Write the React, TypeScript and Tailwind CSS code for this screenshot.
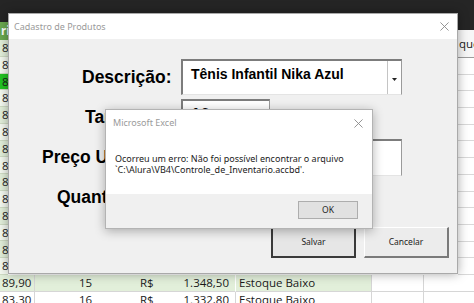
import React from "react"

const leftRows = Array.from({ length: 14 }, (_, i) => i)
const rightRows = Array.from({ length: 13 }, (_, i) => i)

const bottomRows = [
  { a: "89,90", b: "15", c: "1.348,50", d: "Estoque Baixo", green: true },
  { a: "83,30", b: "16", c: "1.332,80", d: "Estoque Baixo", green: false },
]

const CloseX = ({ size = 9 }: { size?: number }) => (
  <svg width={size} height={size} viewBox="0 0 10 10">
    <path d="M0.5 0.5 L9.5 9.5 M9.5 0.5 L0.5 9.5" stroke="#8a8a8a" strokeWidth="1" fill="none" />
  </svg>
)

const Sheet = () => {
  return (
    <div className="flex flex-col h-full font-['Open_Sans',sans-serif] text-[11.5px] text-[#1a1a1a]">
      <div className="flex h-[275px] shrink-0">
        {/* left strip */}
        <div className="w-[8px] flex flex-col overflow-hidden">
          <div className="h-[22px] shrink-0 bg-[#252525]" />
          <div className="h-[18px] shrink-0 bg-[#6aa84f] text-white font-bold leading-[18px] pl-[1px]">ri</div>
          <div className="flex-1 min-h-0 flex flex-col">
            {leftRows.map((r) => (
              <div
                key={r}
                className={`flex-1 min-h-0 flex items-center pl-[2px] leading-none border-b border-[#cfdcc4] ${
                  r === 2 ? "bg-[#21c421]" : r % 2 === 0 ? "bg-[#e2efda]" : "bg-[#f4f9f0]"
                }`}
              >
                8
              </div>
            ))}
          </div>
        </div>
        <div className="flex-1 flex flex-col">
          <div className="h-[22px] shrink-0 bg-[#252525]" />
        </div>
        {/* right strip */}
        <div className="w-[16px] flex flex-col overflow-hidden">
          <div className="h-[30px] shrink-0 bg-[#252525]" />
          <div className="h-[28px] shrink-0 bg-[#f7f7f7] border-b border-[#9c9c9c] flex items-center pl-[1px] whitespace-nowrap">
            que
          </div>
          <div className="flex-1 min-h-0 flex flex-col">
            {rightRows.map((r) => (
              <div key={r} className="flex-1 min-h-0 border-b border-[#d9d9d9] bg-white" />
            ))}
          </div>
        </div>
      </div>
      {bottomRows.map((row) => (
        <div key={row.a} className="flex h-[16.5px] shrink-0 leading-none">
          <div className={`w-[35px] flex items-center pl-[2px] border-r border-b border-[#d6d6d6] ${row.green ? "bg-[#e2efda]" : "bg-white"}`}>
            {row.a}
          </div>
          <div className={`w-[101px] flex items-center justify-center border-b border-[#d6d6d6] ${row.green ? "bg-[#e2efda]" : "bg-white"}`}>
            {row.b}
          </div>
          <div className={`w-[100px] flex items-center justify-between pl-[4px] pr-[6px] border-r border-b border-[#d6d6d6] ${row.green ? "bg-[#e2efda] border-r-white" : "bg-white"}`}>
            <span>R$</span>
            <span>{row.c}</span>
          </div>
          <div className={`w-[136px] flex items-center pl-[3px] border-r border-b border-[#d6d6d6] ${row.green ? "bg-[#e2efda]" : "bg-white"}`}>
            {row.d}
          </div>
          <div className="w-[52px] border-r border-b border-[#d6d6d6] bg-white" />
          <div className="flex-1 border-b border-[#d6d6d6] bg-white" />
        </div>
      ))}
    </div>
  )
}

const fieldBox = "bg-white border-t-2 border-l-2 border-[#7c7c7c] border-r border-b border-r-[#9a9a9a] border-b-[#e4e4e4]"

const FormRow = ({ label, pl, children }: { label: string; pl: string; children: React.ReactNode }) => (
  <div className="flex items-center h-[36px]">
    <div className={`w-[172px] ${pl} font-['Liberation_Sans',Arial,sans-serif] font-bold text-[17.5px] text-black whitespace-nowrap`}>
      {label}
    </div>
    {children}
  </div>
)

const CadastroDialog = () => {
  return (
    <div className="absolute left-[8px] top-[13px] w-[450px] h-[261px] bg-[#f0f0f0] border border-[#a9a9a9] shadow-[0_0_10px_rgba(0,0,0,0.35)] flex flex-col">
      <div className="h-[25px] bg-white flex items-center justify-between pl-[5px] pr-[8px] font-['Noto_Sans',sans-serif] text-[9px] text-[#9a9a9a]">
        <span>Cadastro de Produtos</span>
        <CloseX />
      </div>
      <div className="flex flex-col gap-[4px] pt-[20px]">
        <FormRow label="Descrição:" pl="pl-[73px]">
          <div className={`w-[221px] h-[36px] flex ${fieldBox}`}>
            <div className="flex-1 pl-[8px] pt-[3px] font-['Liberation_Sans',Arial,sans-serif] font-bold text-[14px] text-black whitespace-nowrap">
              Tênis Infantil Nika Azul
            </div>
            <div className="w-[14px] border-l border-[#c4c4c4] flex items-center justify-center pt-[3px]">
              <svg width="5" height="3" viewBox="0 0 5 3">
                <path d="M0 0 H5 L2.5 3 Z" fill="#222" />
              </svg>
            </div>
          </div>
        </FormRow>
        <FormRow label="Tamanho:" pl="pl-[76px]">
          <div className={`w-[89px] h-[36px] pl-[8px] pt-[1px] font-['Liberation_Sans',Arial,sans-serif] font-bold text-[17px] text-black ${fieldBox}`}>
            10
          </div>
        </FormRow>
        <FormRow label="Preço Unitário:" pl="pl-[33px]">
          <div className={`w-[221px] h-[37px] ${fieldBox}`} />
        </FormRow>
        <FormRow label="Quantidade:" pl="pl-[48px]">
          <div className={`w-[89px] h-[36px] ${fieldBox}`} />
        </FormRow>
      </div>
      <div className="flex justify-end gap-[8px] pr-[8px] mt-[12px] font-['Noto_Sans',sans-serif] text-[8.5px] text-[#222]">
        <button className="w-[85px] h-[31px] bg-[#e6e6e6] border-2 border-[#3a3a3a] flex items-center justify-center">
          Salvar
        </button>
        <button className="w-[85px] h-[31px] bg-[#ececec] border border-t-white border-l-white border-r-2 border-b-2 border-r-[#7a7a7a] border-b-[#7a7a7a] flex items-center justify-center">
          Cancelar
        </button>
      </div>
    </div>
  )
}

const MessageBox = () => {
  return (
    <div className="absolute left-[105px] top-[109px] w-[268px] h-[120px] bg-white border border-[#b3b3b3] shadow-[0_2px_10px_rgba(0,0,0,0.3)] flex flex-col font-['Noto_Sans',sans-serif]">
      <div className="h-[26px] flex items-center justify-between pl-[7px] pr-[9px] text-[9px] text-[#9a9a9a]">
        <span>Microsoft Excel</span>
        <CloseX />
      </div>
      <div className="flex-1 pl-[9px] pt-[17px] text-[9px] leading-[11px] text-[#1a1a1a] whitespace-nowrap">
        <div>Ocorreu um erro: Não foi possível encontrar o arquivo</div>
        <div>`C:\Alura\VB4\Controle_de_Inventario.accbd'.</div>
      </div>
      <div className="h-[34px] bg-[#f0f0f0] flex justify-end items-start pt-[7px] pr-[14px]">
        <button className="w-[60px] h-[18px] bg-[#e1e1e1] border border-[#adadad] text-[8.5px] text-[#222] flex items-center justify-center">
          OK
        </button>
      </div>
    </div>
  )
}

export default function App() {
  return (
    <div className="relative w-[474px] h-[303px] overflow-hidden bg-white">
      <Sheet />
      <CadastroDialog />
      <MessageBox />
    </div>
  )
}
